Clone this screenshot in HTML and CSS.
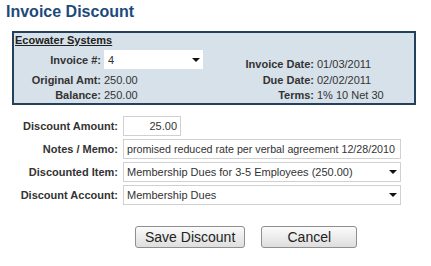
FILE: index.html
```html
<!DOCTYPE html>
<html>
<head>
  <title>Invoice Discount</title>
  <meta charset="UTF-8">
  <link rel="stylesheet" href="styles.css">
</head>
<body>
  <h1 class="page-title">Invoice Discount</h1>
  <div class="customer-box">
    <div class="customer-name">Ecowater Systems</div>
    <div class="info-grid">
      <div class="info-label row1">Invoice #:</div>
      <div class="info-value row1">
        <span class="select-wrap invoice-select">
          <select name="invoice">
            <option>4</option>
          </select>
        </span>
      </div>
      <div class="info-label row1 right-label">Invoice Date:</div>
      <div class="info-value row1 right-value">01/03/2011</div>

      <div class="info-label">Original Amt:</div>
      <div class="info-value">250.00</div>
      <div class="info-label">Due Date:</div>
      <div class="info-value">02/02/2011</div>

      <div class="info-label">Balance:</div>
      <div class="info-value">250.00</div>
      <div class="info-label">Terms:</div>
      <div class="info-value">1% 10 Net 30</div>
    </div>
  </div>

  <form class="discount-form">
    <label for="amount">Discount Amount:</label>
    <div><input type="text" id="amount" class="amount-input" value="25.00"></div>

    <label for="memo">Notes / Memo:</label>
    <div><input type="text" id="memo" class="wide-input" value="promised reduced rate per verbal agreement 12/28/2010"></div>

    <label for="item">Discounted Item:</label>
    <div>
      <span class="select-wrap wide-select">
        <select id="item">
          <option>Membership Dues for 3-5 Employees (250.00)</option>
        </select>
      </span>
    </div>

    <label for="account">Discount Account:</label>
    <div>
      <span class="select-wrap wide-select">
        <select id="account">
          <option>Membership Dues</option>
        </select>
      </span>
    </div>
  </form>

  <div class="actions">
    <button type="button" class="btn btn-save">Save Discount</button>
    <button type="button" class="btn btn-cancel">Cancel</button>
  </div>
</body>
</html>
```

FILE: styles.css
```css
body {
  margin: 0;
  font-family: "Liberation Sans", Arial, sans-serif;
  font-size: 11px;
  color: #333;
  background: #fff;
}
.page-title {
  margin: 3px 0 0 6px;
  font-size: 16px;
  line-height: 18px;
  font-weight: bold;
  color: #1d4a7a;
}
.customer-box {
  box-sizing: border-box;
  width: 404px;
  margin: 10px 0 0 12px;
  padding: 0 0 1px 1px;
  background: #d7e1ea;
  border: 2px solid #23405f;
}
.customer-name {
  line-height: 14px;
  font-weight: bold;
  text-decoration: underline;
  color: #222;
}
.info-grid {
  display: grid;
  grid-template-columns: 86px 107px 100px 1fr;
  grid-template-rows: 23px 17px 14px;
  column-gap: 3px;
  margin-top: 1px;
  line-height: 14px;
}
.info-label {
  text-align: right;
  font-weight: bold;
  color: #333;
  align-self: center;
}
.info-value {
  align-self: center;
}
.right-label,
.right-value {
  align-self: end;
}
.select-wrap {
  position: relative;
  display: inline-block;
}
.select-wrap::after {
  content: "";
  position: absolute;
  top: 50%;
  right: 4px;
  margin-top: -2px;
  border-left: 4px solid transparent;
  border-right: 4px solid transparent;
  border-top: 4px solid #111;
  pointer-events: none;
}
select {
  appearance: none;
  -webkit-appearance: none;
  box-sizing: border-box;
  height: 20px;
  padding: 0 16px 0 3px;
  font-family: inherit;
  font-size: 11px;
  color: #333;
  background: #fff;
  border: 1px solid #d0d0d0;
  border-radius: 0;
}
.invoice-select select {
  width: 99px;
  height: 19px;
  border-color: #fff;
}
.invoice-select::after {
  right: 3px;
}
.wide-select select {
  width: 278px;
}
.discount-form {
  display: grid;
  grid-template-columns: 118px 278px;
  column-gap: 5px;
  row-gap: 3px;
  margin-top: 11px;
}
.discount-form label {
  text-align: right;
  font-weight: bold;
  align-self: center;
}
.discount-form input {
  box-sizing: border-box;
  height: 20px;
  padding: 0 3px;
  font-family: inherit;
  font-size: 11px;
  color: #333;
  border: 1px solid #d0d0d0;
}
.amount-input {
  width: 58px;
  text-align: right;
}
.discount-form .wide-input {
  width: 278px;
  padding: 0 2px 0 3px;
  font-size: 10.7px;
}
.actions {
  display: flex;
  gap: 16px;
  margin: 21px 0 0 135px;
}
.btn {
  height: 22px;
  padding: 0 9px;
  font-family: inherit;
  font-size: 14px;
  color: #222;
  background: linear-gradient(#fbfbfb, #dedede);
  border: 1px solid #8f8f8f;
  border-radius: 3px;
}
.btn-cancel {
  width: 96px;
}
```
